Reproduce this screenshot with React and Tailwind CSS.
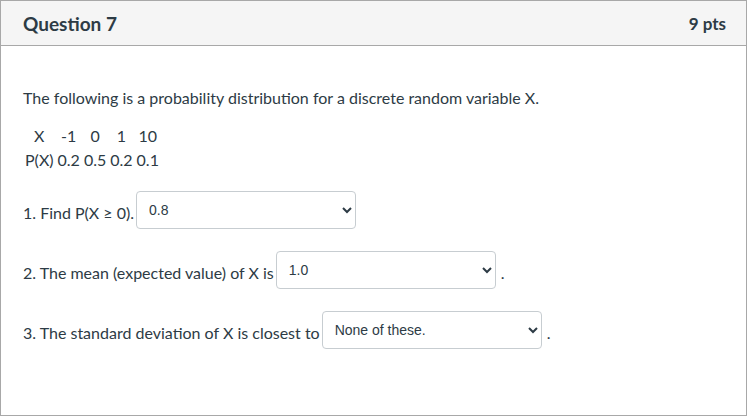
import React from "react";

function Sel({ value, options }) {
  return (
    <select
      defaultValue={value}
      className="ml-[2px] h-[38px] w-[220px] shrink-0 rounded-[4px] border border-[#c7cdd1] bg-white pl-[8px] pr-0 font-['Liberation_Sans',Arial,sans-serif] text-[14px] text-[#2d3b45] outline-none"
    >
      {options.map((o) => (
        <option key={o} value={o}>
          {o}
        </option>
      ))}
    </select>
  );
}

export default function App() {
  const font = "font-['Lato','Noto_Sans',sans-serif]";
  return (
    <div className={`w-[748px] h-[420px] bg-white ${font} text-[#2d3b45]`}>
      <div className="w-[747px] h-[416px] border border-[#a8a8a8] flex flex-col">
        <div className="h-[45px] shrink-0 bg-[#f5f5f5] border-b border-[#a8a8a8] flex items-center justify-between pl-[22px] pr-[20px]">
          <h2 className="text-[19px] font-bold leading-none">Question 7</h2>
          <span className="text-[17px] font-bold leading-none text-[#2d3b45]">9 pts</span>
        </div>
        <div className="pl-[22px] pt-[40px] text-[16px] leading-[24px]">
          <p>The following is a probability distribution for a discrete random variable X.</p>
          <table className="mt-[14px] border-collapse">
            <tbody>
              <tr>
                {["X", "-1", "0", "1", "10"].map((c, i) => (
                  <td key={i} className="px-[2px] py-0 text-center">{c}</td>
                ))}
              </tr>
              <tr>
                {["P(X)", "0.2", "0.5", "0.2", "0.1"].map((c, i) => (
                  <td key={i} className="px-[2px] py-0 text-center">{c}</td>
                ))}
              </tr>
            </tbody>
          </table>
          <div className="mt-[19px] flex items-start">
            <span className="mt-[10px]">1. Find P(X ≥ 0).</span>
            <Sel value="0.8" options={["[ Choose ]", "0.8", "0.7", "0.3", "0.2"]} />
          </div>
          <div className="mt-[22px] flex items-start">
            <span className="mt-[10px]">2. The mean (expected value) of X is</span>
            <Sel value="1.0" options={["[ Choose ]", "1.0", "0.8", "2.0", "0.0"]} />
            <span className="mt-[10px] ml-[5px]">.</span>
          </div>
          <div className="mt-[22px] flex items-start">
            <span className="mt-[10px]">3. The standard deviation of X is closest to</span>
            <Sel value="None of these." options={["[ Choose ]", "2.9", "3.0", "9.0", "None of these."]} />
            <span className="mt-[10px] ml-[5px]">.</span>
          </div>
        </div>
      </div>
    </div>
  );
}
